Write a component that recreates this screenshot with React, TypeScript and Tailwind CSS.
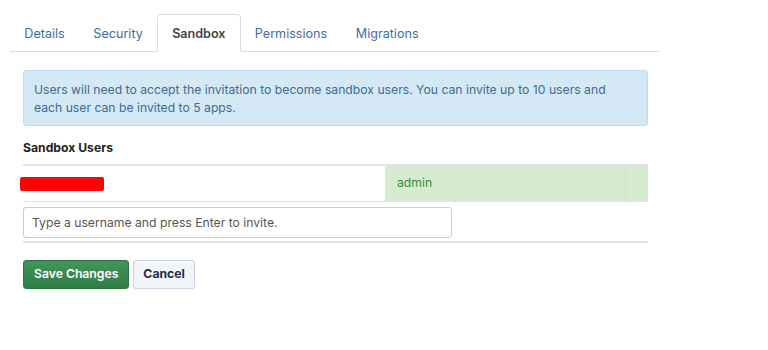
import React from "react";

export default function App() {
  const tabs = ["Details", "Security", "Sandbox", "Permissions", "Migrations"];
  return (
    <div className="w-[768px] h-[350px] bg-white" style={{ fontFamily: "Inter, 'Noto Sans', sans-serif" }}>
      <div className="pt-[14px] pl-[10px] w-[660px]">
        <div className="flex border-b border-[#dddddd] h-[38px]">
          {tabs.map((t) =>
            t === "Sandbox" ? (
              <div
                key={t}
                className="h-[38px] -mb-px px-[14px] pt-[3px] flex items-center bg-white border border-[#dddddd] border-b-white rounded-t-[4px] text-[12.6px] font-semibold text-[#444444]"
              >
                {t}
              </div>
            ) : (
              <div key={t} className="h-[37px] px-[14.3px] pt-[3px] flex items-center text-[12.6px] text-[#3f6e9e]">
                {t}
              </div>
            )
          )}
        </div>
      </div>
      <div className="pl-[23px] w-[648px]">
        <div className="mt-[18px] h-[56px] bg-[#d4e8f5] border border-[#b7e0f1] rounded-[3px] px-[10px] pt-[10px] text-[12.2px] leading-[18px] text-[#3d6c92]">
          Users will need to accept the invitation to become sandbox users. You can invite up to 10 users and each user can be invited to 5 apps.
        </div>
        <div className="mt-[14px] text-[12.2px] font-bold text-[#222222] leading-[16px]">Sandbox Users</div>
        <div className="mt-[8px] border-t-2 border-[#e2e2e2]">
          <div className="flex h-[36px] border-b border-[#e2e2e2]">
            <div className="w-[362px] flex items-center">
              <div className="-ml-[3px] w-[84px] h-[14px] bg-[#ff0000] rounded-[2px]" />
            </div>
            <div className="w-[240px] bg-[#d6ecd0] flex items-center pl-[12px] text-[12.2px] text-[#3e8a3e]">admin</div>
            <div className="flex-1 bg-[#d6ecd0] border-l border-[#c8e4c0]" />
          </div>
          <div className="pt-[5px] pb-[3px] border-b-2 border-[#e2e2e2]">
            <input
              className="w-[429px] h-[31px] border border-[#cccccc] rounded-[3px] px-[8px] text-[12.2px] text-[#333333] placeholder:text-[#555555] outline-none"
              placeholder="Type a username and press Enter to invite."
            />
          </div>
        </div>
        <div className="mt-[17px] flex gap-[4px]">
          <button className="h-[29px] px-[10px] rounded-[3px] bg-gradient-to-b from-[#41955a] to-[#2f7d46] border border-[#2d7443] text-white text-[12.2px] font-semibold">
            Save Changes
          </button>
          <button className="h-[29px] px-[9px] rounded-[3px] bg-[#f1f4f8] border border-[#c9d5e3] text-[#1f2f4a] text-[12.2px] font-bold">
            Cancel
          </button>
        </div>
      </div>
    </div>
  );
}
